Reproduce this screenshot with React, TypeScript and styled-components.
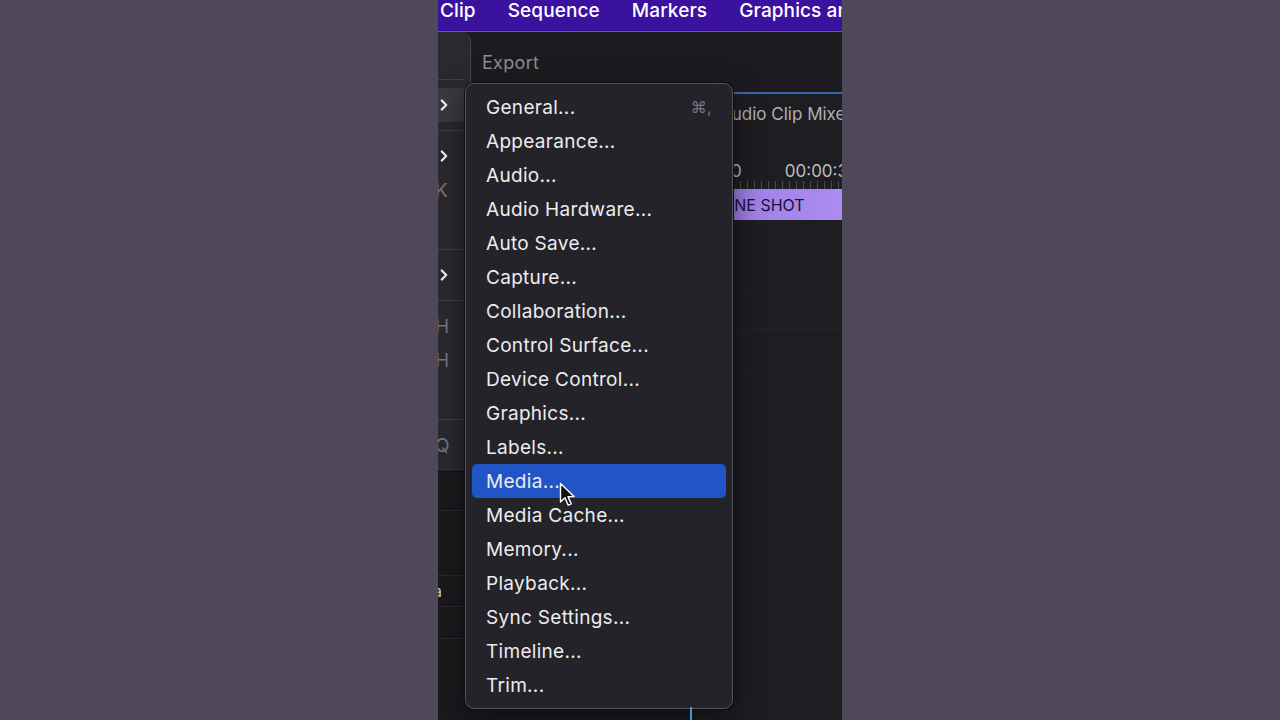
import React from 'react';
import styled, { createGlobalStyle } from 'styled-components';
import { ChevronRight } from 'lucide-react';

const GlobalStyle = createGlobalStyle`
  html, body {
    margin: 0;
    padding: 0;
    background: #4f4859;
  }
  body {
    font-family: Inter, "Noto Sans", sans-serif;
    -webkit-font-smoothing: antialiased;
  }
`;

type ParentRow =
  | { kind: 'item'; arrow?: boolean; key?: string; active?: boolean }
  | { kind: 'sep' };

const parentRows: ParentRow[] = [
  { kind: 'item' },
  { kind: 'sep' },
  { kind: 'item', arrow: true, active: true },
  { kind: 'sep' },
  { kind: 'item', arrow: true },
  { kind: 'item', key: 'K' },
  { kind: 'item' },
  { kind: 'sep' },
  { kind: 'item', arrow: true },
  { kind: 'sep' },
  { kind: 'item', key: 'H' },
  { kind: 'item', key: 'H' },
  { kind: 'item' },
  { kind: 'sep' },
  { kind: 'item', key: 'Q' },
];

const prefItems = [
  'General...',
  'Appearance...',
  'Audio...',
  'Audio Hardware...',
  'Auto Save...',
  'Capture...',
  'Collaboration...',
  'Control Surface...',
  'Device Control...',
  'Graphics...',
  'Labels...',
  'Media...',
  'Media Cache...',
  'Memory...',
  'Playback...',
  'Sync Settings...',
  'Timeline...',
  'Trim...',
];

const App: React.FC = () => {
  return (
    <Page>
      <GlobalStyle />
      <Frame>
        <MenuBar>
          <MenuBarItem>Clip</MenuBarItem>
          <MenuBarItem>Sequence</MenuBarItem>
          <MenuBarItem>Markers</MenuBarItem>
          <MenuBarItem>Graphics and Titles</MenuBarItem>
        </MenuBar>

        <Workspace>
          <LeftColumn>
            <ParentMenu>
              {parentRows.map((row, i) =>
                row.kind === 'sep' ? (
                  <ParentSeparator key={i} />
                ) : (
                  <ParentItem key={i} $active={row.active}>
                    {row.arrow && <ChevronRight size={18} strokeWidth={3} color="#f2f2f2" />}
                    {row.key && <ParentKey>{row.key}</ParentKey>}
                  </ParentItem>
                )
              )}
            </ParentMenu>
            <LowerStrip>
              <StripRow $h={41} />
              <StripRow $h={65} />
              <StripRow $h={31}>
                <StripLabel>a</StripLabel>
              </StripRow>
              <StripRow $h={32} />
            </LowerStrip>
          </LeftColumn>

          <RightColumn>
            <ExportBar>Export</ExportBar>
            <Panels>
              <SourcePanel />
              <TimelinePanel>
                <TabRow>Audio Clip Mixer</TabRow>
                <Ruler>
                  <Timecode>00:00:20</Timecode>
                  <Timecode>00:00:30</Timecode>
                </Ruler>
                <Ticks />
                <ClipTrack>
                  <Clip>ONE SHOT</Clip>
                </ClipTrack>
                <TrackRow $h={70} />
                <TrackRow $h={38} $tint />
                <TrackRow $h={38} />
              </TimelinePanel>
            </Panels>
          </RightColumn>
        </Workspace>

        <Submenu>
          {prefItems.map((label) => (
            <SubmenuItem key={label} $selected={label === 'Media...'}>
              <span>{label}</span>
              {label === 'General...' && <Shortcut>⌘,</Shortcut>}
            </SubmenuItem>
          ))}
        </Submenu>

        <Playhead />

        <Cursor width="17" height="26" viewBox="0 0 17 26">
          <path
            d="M1.5 1.5 L1.5 20 L6 15.8 L9.2 23.2 L12.2 21.9 L9 14.6 L15 14.6 Z"
            fill="#111"
            stroke="#fff"
            strokeWidth="1.4"
            strokeLinejoin="round"
          />
        </Cursor>
      </Frame>
    </Page>
  );
};

const Page = styled.div`
  width: 1280px;
  height: 720px;
  display: flex;
  justify-content: center;
  background: #4f4859;
  overflow: hidden;
`;

const Frame = styled.div`
  position: relative;
  width: 404px;
  height: 720px;
  display: flex;
  flex-direction: column;
  background: #1c1b20;
  overflow: hidden;
`;

const MenuBar = styled.div`
  height: 31px;
  flex-shrink: 0;
  display: flex;
  align-items: flex-start;
  gap: 32px;
  padding-left: 2px;
  background: #3b11a0;
  border-bottom: 1px solid #6b4fce;
  white-space: nowrap;
  overflow: hidden;
`;

const MenuBarItem = styled.span`
  font-size: 19px;
  line-height: 22px;
  font-weight: 500;
  letter-spacing: 0.1px;
  color: #fff;
`;

const Workspace = styled.div`
  flex: 1;
  display: grid;
  grid-template-columns: 33px 1fr;
  min-height: 0;
`;

const LeftColumn = styled.div`
  display: flex;
  flex-direction: column;
`;

const ParentMenu = styled.div`
  height: 438px;
  box-sizing: border-box;
  padding: 5px 0 6px;
  display: flex;
  flex-direction: column;
  background: #2a292f;
  border-right: 1px solid #47464c;
  border-bottom: 1px solid #38373c;
  border-top-right-radius: 9px;
`;

const ParentItem = styled.div<{ $active?: boolean }>`
  height: 34px;
  flex-shrink: 0;
  display: flex;
  align-items: center;
  margin-right: 5px;
  background: ${(p) => (p.$active ? '#3a3940' : 'transparent')};

  svg {
    margin-left: -3px;
  }
`;

const ParentKey = styled.span`
  font-size: 19px;
  color: #77767c;
  margin-left: -3px;
`;

const ParentSeparator = styled.div`
  height: 17px;
  flex-shrink: 0;
  display: flex;
  align-items: center;
  &::after {
    content: '';
    display: block;
    width: 26px;
    height: 1px;
    background: #403f45;
  }
`;

const LowerStrip = styled.div`
  flex: 1;
  display: flex;
  flex-direction: column;
  background: #1a191d;
`;

const StripRow = styled.div<{ $h: number }>`
  height: ${(p) => p.$h}px;
  flex-shrink: 0;
  box-sizing: border-box;
  border-bottom: 1px solid #2c2b30;
  display: flex;
  align-items: center;
  overflow: hidden;
`;

const StripLabel = styled.span`
  font-size: 16px;
  color: #c8c8cc;
  margin-left: -5px;
`;

const RightColumn = styled.div`
  display: flex;
  flex-direction: column;
  min-width: 0;
`;

const ExportBar = styled.div`
  height: 60px;
  flex-shrink: 0;
  display: flex;
  align-items: center;
  padding-left: 11px;
  font-size: 18px;
  letter-spacing: 0.3px;
  color: #8d8c92;
`;

const Panels = styled.div`
  flex: 1;
  display: grid;
  grid-template-columns: 190px 1fr;
  gap: 2px;
`;

const SourcePanel = styled.div`
  background: #1d1c21;
  border-top: 2px solid #26252a;
`;

const TimelinePanel = styled.div`
  display: flex;
  flex-direction: column;
  background: #1e1d22;
  border-top: 2px solid #3a67b4;
  white-space: nowrap;
  overflow: hidden;
`;

const TabRow = styled.div`
  height: 36px;
  display: flex;
  align-items: center;
  padding-top: 3px;
  box-sizing: border-box;
  padding-left: 57px;
  font-size: 17px;
  color: #b0afb4;
`;

const Ruler = styled.div`
  height: 20px;
  margin-top: 31px;
  display: flex;
  align-items: center;
  gap: 43px;
  padding-left: 5px;
`;

const Timecode = styled.span`
  font-size: 17px;
  color: #bdbcc1;
`;

const Ticks = styled.div`
  height: 8px;
  margin-left: 70px;
  background: repeating-linear-gradient(
    to right,
    #6a6970 0,
    #6a6970 1px,
    transparent 1px,
    transparent 7px
  );
  opacity: 0.6;
`;

const ClipTrack = styled.div`
  height: 31px;
  display: flex;
  padding-left: 58px;
`;

const Clip = styled.div`
  flex: 1;
  display: flex;
  align-items: center;
  padding-left: 1px;
  background: linear-gradient(to right, #9c7fe2, #ad8bf0);
  color: #1b0f3c;
  font-size: 16px;
`;

const TrackRow = styled.div<{ $h: number; $tint?: boolean }>`
  height: ${(p) => p.$h}px;
  flex-shrink: 0;
  border-bottom: 1px solid ${(p) => (p.$tint ? '#2a2224' : '#222126')};
`;

const Submenu = styled.div`
  position: absolute;
  left: 27px;
  top: 83px;
  width: 268px;
  box-sizing: border-box;
  padding: 6px;
  display: flex;
  flex-direction: column;
  background: #24232a;
  border: 1px solid #56555c;
  border-radius: 9px;
  box-shadow: 0 0 0 1px #0e0e10, 0 10px 30px rgba(0, 0, 0, 0.55);
`;

const SubmenuItem = styled.div<{ $selected?: boolean }>`
  height: 34px;
  display: flex;
  align-items: center;
  justify-content: space-between;
  padding: 0 14px;
  border-radius: 5px;
  font-size: 19px;
  letter-spacing: 0.3px;
  color: #ececef;
  background: ${(p) => (p.$selected ? '#2154c6' : 'transparent')};
`;

const Shortcut = styled.span`
  font-size: 16px;
  color: #77767c;
`;

const Playhead = styled.div`
  position: absolute;
  left: 252px;
  top: 707px;
  width: 2px;
  height: 13px;
  background: #3f9ad6;
`;

const Cursor = styled.svg`
  position: absolute;
  left: 121px;
  top: 482px;
`;

export default App;
